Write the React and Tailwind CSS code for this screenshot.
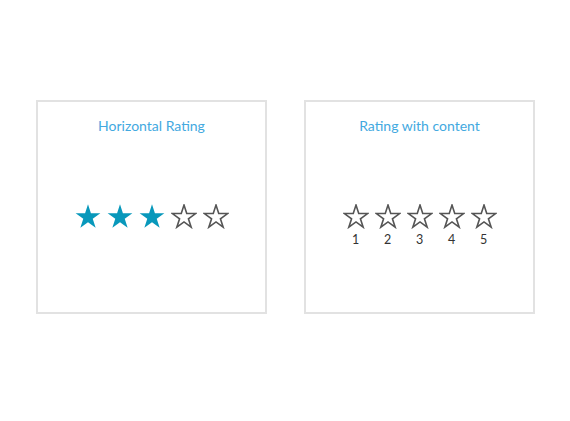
import React from "react";

function starPoints(cx, cy, R) {
  const r = R * 0.382;
  const pts = [];
  for (let i = 0; i < 10; i++) {
    const rad = i % 2 === 0 ? R : r;
    const a = (Math.PI / 5) * i - Math.PI / 2;
    pts.push(`${(cx + rad * Math.cos(a)).toFixed(2)},${(cy + rad * Math.sin(a)).toFixed(2)}`);
  }
  return pts.join(" ");
}

function Star({ filled }) {
  return (
    <svg width="26" height="25" viewBox="0 0 26 25" className="block">
      {filled ? (
        <polygon points={starPoints(13, 13.3, 13)} fill="#0898bb" />
      ) : (
        <polygon
          points={starPoints(13, 13.3, 12.2)}
          fill="none"
          stroke="#555555"
          strokeWidth="1.6"
          strokeLinejoin="miter"
        />
      )}
    </svg>
  );
}

function Card({ title, children }) {
  return (
    <div className="w-[231px] h-[214px] border-2 border-[#e2e2e2] flex flex-col items-center pt-[14px]">
      <div className="h-[20px] leading-[20px] text-[14px] text-[#43a9df] font-['Lato',sans-serif]">{title}</div>
      {children}
    </div>
  );
}

export default function App() {
  const value = 3;
  return (
    <div className="w-[570px] h-[421px] bg-white flex gap-[37px] pl-[36px] pt-[100px] font-['Lato',sans-serif]">
      <Card title="Horizontal Rating">
        <div className="flex gap-[6px] mt-[68px]">
          {[1, 2, 3, 4, 5].map((i) => (
            <Star key={i} filled={i <= value} />
          ))}
        </div>
      </Card>
      <Card title="Rating with content">
        <div className="flex gap-[6px] mt-[68px]">
          {[1, 2, 3, 4, 5].map((i) => (
            <div key={i} className="flex flex-col items-center">
              <Star filled={false} />
              <span className="text-[12.5px] leading-[14px] mt-[4px] text-[#333]">{i}</span>
            </div>
          ))}
        </div>
      </Card>
    </div>
  );
}
